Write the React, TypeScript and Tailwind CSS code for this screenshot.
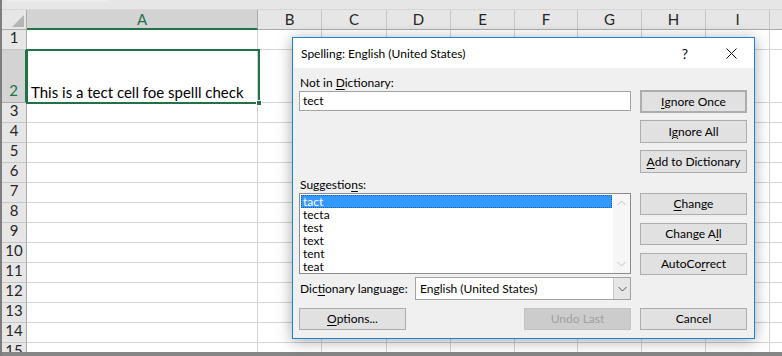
import React from 'react';

const columns = [
  { name: 'A', w: 'w-[231px]' },
  { name: 'B', w: 'w-[64px]' },
  { name: 'C', w: 'w-[65px]' },
  { name: 'D', w: 'w-[64px]' },
  { name: 'E', w: 'w-[64px]' },
  { name: 'F', w: 'w-[63px]' },
  { name: 'G', w: 'w-[64px]' },
  { name: 'H', w: 'w-[64px]' },
  { name: 'I', w: 'w-[64px]' },
  { name: '', w: 'w-[64px]' },
];

const rows = Array.from({ length: 15 }, (_, i) => i + 1);
const suggestions = ['tact', 'tecta', 'test', 'text', 'tent', 'teat'];

function DlgButton({ children, className = '' }: { children: React.ReactNode; className?: string }) {
  return (
    <div
      className={`h-[22px] w-[107px] flex items-center justify-center bg-[#e1e1e1] border border-[#adadad] text-black ${className}`}
    >
      {children}
    </div>
  );
}

function U({ children }: { children: React.ReactNode }) {
  return <span className="underline underline-offset-[2px] decoration-1">{children}</span>;
}

function SpellingDialog() {
  return (
    <div className="absolute left-[290px] top-[37px] w-[463px] h-[302px] border border-[#1883d7] bg-[#f0f0f0] flex flex-col shadow-[0_2px_14px_rgba(0,0,0,0.35)] font-['Lato',sans-serif] text-[12px] text-black">
      {/* title bar */}
      <div className="h-[30px] shrink-0 bg-white flex items-center pl-[8px]">
        <span className="text-[12px] pt-[1px]">Spelling: English (United States)</span>
        <div className="ml-auto flex h-full">
          <div className="w-[46px] flex items-center justify-center text-[14px]">?</div>
          <div className="w-[46px] flex items-center justify-center">
            <svg width="11" height="11" viewBox="0 0 11 11">
              <path d="M0.5 0.5 L10.5 10.5 M10.5 0.5 L0.5 10.5" stroke="#111" strokeWidth="1" />
            </svg>
          </div>
        </div>
      </div>

      {/* body */}
      <div className="flex pl-[6px] pr-[7px] gap-[9px]">
        <div className="w-[332px] flex flex-col">
          <div className="mt-[7px] h-[15px] leading-[15px] pl-[1px]">
            Not in <U>D</U>ictionary:
          </div>
          <div className="mt-[1px] h-[20px] bg-white border border-[#a3a3a3] flex items-center pl-[3px]">tect</div>

          <div className="mt-[66px] h-[15px] leading-[15px] pl-[1px]">
            Suggestio<U>n</U>s:
          </div>
          <div className="mt-[1px] h-[81px] bg-white border border-[#8c8c8c] flex">
            <div className="flex-1 pt-[1px] flex flex-col">
              {suggestions.map((s, i) => (
                <div
                  key={s}
                  className={
                    i === 0
                      ? 'mx-[1px] h-[13px] leading-[13px] pl-[2px] bg-[#3399ff] text-white outline-1 outline-dotted -outline-offset-1 outline-[#1d5aa0]'
                      : 'mx-[1px] h-[13px] leading-[13px] pl-[2px]'
                  }
                >
                  {s}
                </div>
              ))}
            </div>
            <div className="w-[17px] bg-[#f6f6f6] flex flex-col items-center justify-between py-[6px]">
              <svg width="9" height="6" viewBox="0 0 9 6">
                <path d="M0.5 5 L4.5 1 L8.5 5" fill="none" stroke="#c2c2c2" strokeWidth="1" />
              </svg>
              <svg width="9" height="6" viewBox="0 0 9 6">
                <path d="M0.5 1 L4.5 5 L8.5 1" fill="none" stroke="#c2c2c2" strokeWidth="1" />
              </svg>
            </div>
          </div>

          <div className="mt-[3px] h-[23px] flex items-center">
            <div className="w-[116px] pl-[1px]">
              Dic<U>t</U>ionary language:
            </div>
            <div className="w-[216px] h-full bg-white border border-[#a3a3a3] flex">
              <div className="flex-1 flex items-center pl-[4px]">English (United States)</div>
              <div className="w-[17px] bg-[#e6e6e6] border-l border-[#c8c8c8] flex items-center justify-center">
                <svg width="9" height="6" viewBox="0 0 9 6">
                  <path d="M0.5 1 L4.5 5 L8.5 1" fill="none" stroke="#555" strokeWidth="1" />
                </svg>
              </div>
            </div>
          </div>

          <div className="mt-[8px] flex justify-between">
            <DlgButton>
              <U>O</U>ptions...
            </DlgButton>
            <div className="h-[22px] w-[107px] flex items-center justify-center bg-[#cccccc] border border-[#c4c4c4] text-[#a0a0a0]">
              Undo Last
            </div>
          </div>
        </div>

        <div className="w-[107px] flex flex-col">
          <DlgButton className="mt-[22px] h-[23px] border-2 border-[#0078d7]">
            <U>I</U>gnore Once
          </DlgButton>
          <DlgButton className="mt-[7px] h-[23px]">
            I<U>g</U>nore All
          </DlgButton>
          <DlgButton className="mt-[7px] h-[23px]">
            <U>A</U>dd to Dictionary
          </DlgButton>
          <DlgButton className="mt-[20px]">
            <U>C</U>hange
          </DlgButton>
          <DlgButton className="mt-[8px]">
            Change A<U>l</U>l
          </DlgButton>
          <DlgButton className="mt-[8px]">
            AutoCo<U>r</U>rect
          </DlgButton>
          <DlgButton className="mt-[33px]">Cancel</DlgButton>
        </div>
      </div>
    </div>
  );
}

export default function App() {
  return (
    <div className="relative w-[782px] h-[356px] overflow-hidden bg-white border-l-2 border-[#7d7d7d] flex flex-col font-['Lato',sans-serif]">
      <div className="h-[352px] shrink-0 overflow-hidden flex flex-col">
        {/* formula bar edge */}
        <div className="h-[10px] shrink-0 bg-[#e6e6e6] border-b border-[#d6d6d6] flex">
          <div className="ml-[5px] w-[101px] h-[2px] bg-[#ededed]" />
        </div>

        {/* column headers */}
        <div className="h-[20px] flex shrink-0">
          <div className="w-[25px] shrink-0 bg-[#e6e6e6] border-r border-b border-[#ababab] flex items-end justify-end pr-[2px] pb-[2px]">
            <svg width="12" height="12" viewBox="0 0 12 12">
              <polygon points="12,0 12,12 0,12" fill="#b5b5b5" />
            </svg>
          </div>
          {columns.map((c, i) => (
            <div
              key={i}
              className={
                c.name === 'A'
                  ? `${c.w} shrink-0 bg-[#d3d3d3] border-r border-[#ababab] border-b-2 border-b-[#217346] flex items-center justify-center text-[15px] text-[#217346]`
                  : `${c.w} shrink-0 bg-[#e6e6e6] border-r border-[#c6c6c6] border-b border-b-[#ababab] flex items-center justify-center text-[15px] text-[#262626]`
              }
            >
              {c.name}
            </div>
          ))}
        </div>

        {/* rows */}
        <div className="relative flex flex-col shrink-0">
          {rows.map((r) => (
            <div key={r} className={`flex shrink-0 ${r === 2 ? 'h-[53px]' : 'h-[20px]'}`}>
              <div
                className={
                  r === 2
                    ? 'w-[25px] shrink-0 bg-[#d3d3d3] border-r-2 border-r-[#217346] border-b border-b-[#ababab] flex items-end justify-center pb-[1px] text-[15px] text-[#217346]'
                    : 'w-[25px] shrink-0 bg-[#e6e6e6] border-r border-r-[#ababab] border-b border-b-[#c6c6c6] flex items-end justify-center pb-[1px] text-[15px] text-[#262626]'
                }
              >
                {r}
              </div>
              {columns.map((c, i) => (
                <div key={i} className={`${c.w} shrink-0 border-r border-b border-[#d4d4d4]`} />
              ))}
            </div>
          ))}

          {/* selected cell A2 */}
          <div className="absolute left-[24px] top-[19px] w-[234px] h-[55px] border-2 border-[#217346] flex items-end pl-[3px] pb-[1px] text-[15px] text-black leading-[18px]">
            This is a tect cell foe spelll check
            <div className="absolute right-[-4px] bottom-[-4px] w-[6px] h-[6px] bg-[#217346] border border-white" />
          </div>
        </div>
      </div>
      <div className="h-[4px] shrink-0 bg-[#868686]" />

      <SpellingDialog />
    </div>
  );
}
